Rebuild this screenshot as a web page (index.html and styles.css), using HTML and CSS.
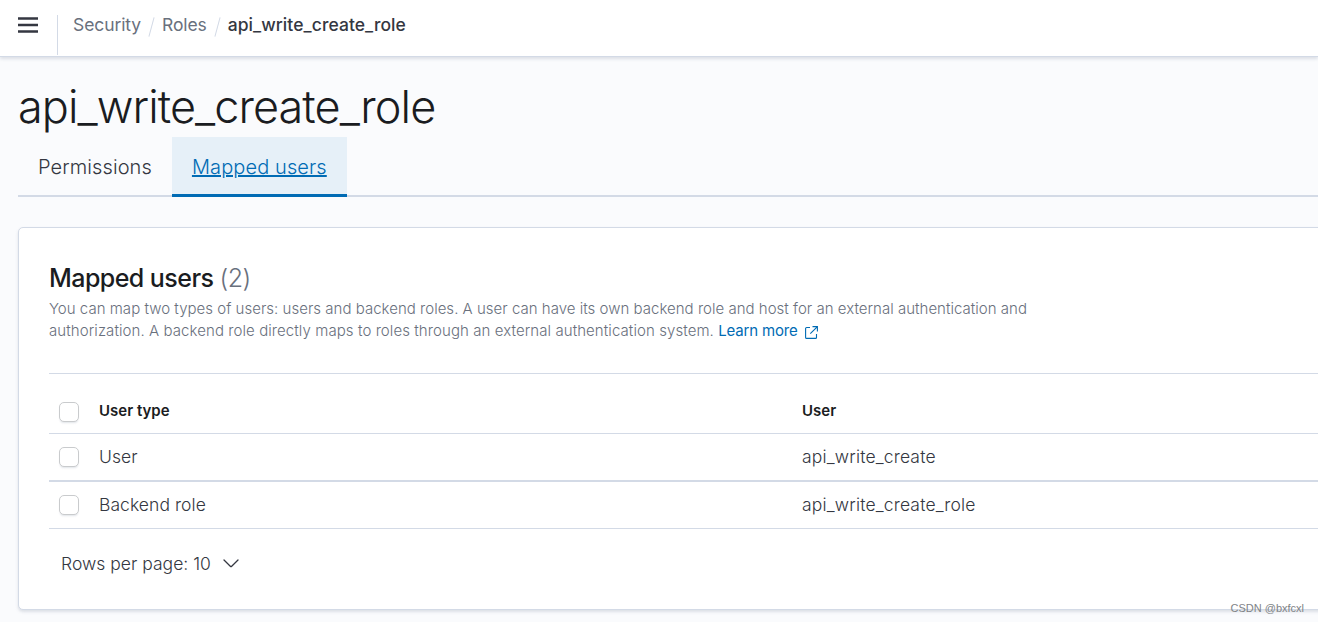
FILE: index.html
```html
<!DOCTYPE html>
<html lang="en">
<head>
  <meta charset="UTF-8">
  <meta name="viewport" content="width=device-width, initial-scale=1.0">
  <title>api_write_create_role</title>
  <link rel="stylesheet" href="styles.css">
</head>
<body>
  <header class="header">
    <button class="menu-button" type="button" aria-label="Toggle navigation">
      <svg width="20" height="16" viewBox="0 0 20 16">
        <path d="M0 1.5h20M0 8h20M0 14.5h20" stroke="#343741" stroke-width="2.5"/>
      </svg>
    </button>
    <nav class="breadcrumbs">
      <a class="crumb" href="#">Security</a>
      <span class="divider"></span>
      <a class="crumb" href="#">Roles</a>
      <span class="divider"></span>
      <span class="crumb current">api_write_create_role</span>
    </nav>
  </header>

  <main class="page">
    <h1 class="page-title">api_write_create_role</h1>
    <div class="tabs">
      <a class="tab" href="#">Permissions</a>
      <a class="tab selected" href="#">Mapped users</a>
    </div>

    <section class="panel">
      <h3 class="panel-title">Mapped users <span class="count">(2)</span></h3>
      <p class="description">
        You can map two types of users: users and backend roles. A user can have its own backend role and host for an external authentication and<br>
        <span class="second-line">authorization. A backend role directly maps to roles through an external authentication system.</span>
        <a class="link" href="#">Learn more<svg class="popout" width="13" height="13" viewBox="0 0 13 13" fill="none" stroke="#006bb4" stroke-width="1.1"><path d="M5 1.5H1.6a1 1 0 0 0-1 1v8.9a1 1 0 0 0 1 1h8.9a1 1 0 0 0 1-1V8M7.5.6h4.9v4.9M12.2.8 5.3 7.7"/></svg></a>
      </p>

      <table class="users">
        <thead>
          <tr>
            <th class="check"><input type="checkbox"></th>
            <th class="type">User type</th>
            <th>User</th>
          </tr>
        </thead>
        <tbody>
          <tr>
            <td class="check"><input type="checkbox"></td>
            <td>User</td>
            <td class="name">api_write_create</td>
          </tr>
          <tr>
            <td class="check"><input type="checkbox"></td>
            <td>Backend role</td>
            <td class="name">api_write_create_role</td>
          </tr>
        </tbody>
      </table>

      <button class="rows-button" type="button">
        Rows per page: 10
        <svg width="16" height="9" viewBox="0 0 16 9" fill="none" stroke="#343741" stroke-width="1.3" stroke-linecap="round" stroke-linejoin="round"><path d="M1 1l6.3 6.3a1 1 0 0 0 1.4 0L15 1"/></svg>
      </button>
    </section>
  </main>
  <span class="watermark">CSDN @bxfcxl</span>
</body>
</html>
```

FILE: styles.css
```css
* {
  box-sizing: border-box;
}
body {
  margin: 0;
  height: 622px;
  overflow: hidden;
  background-color: #fafbfd;
  color: #343741;
  font-family: Inter, sans-serif;
  font-size: 17.5px;
  font-weight: 300;
}
a {
  color: inherit;
  text-decoration: none;
}
button {
  display: flex;
  align-items: center;
  padding: 0;
  border: none;
  background: none;
  color: inherit;
  font: inherit;
  cursor: pointer;
}
.header {
  display: flex;
  align-items: flex-start;
  height: 57px;
  background-color: #fff;
  border-bottom: 1px solid #d3dae6;
  box-shadow: 0 2px 3px rgba(152, 162, 179, 0.3);
}
.menu-button {
  width: 58px;
  height: 40px;
  margin-top: 15px;
  padding: 2px 0 0 18px;
  align-items: flex-start;
  border-right: 1px solid #d3dae6;
}
.breadcrumbs {
  display: flex;
  align-items: center;
  height: 26px;
  margin: 11px 0 0 15px;
  font-weight: 400;
}
.crumb {
  color: #69707d;
  letter-spacing: -0.1px;
}
.crumb.current {
  color: #343741;
  font-weight: 450;
  letter-spacing: 0.07px;
}
.divider {
  width: 1px;
  height: 20px;
  margin: 6px 10px 0;
  background-color: #d3dae6;
  transform: rotate(15deg);
}
.page {
  padding: 23px 0 0 18px;
}
.page-title {
  margin: 0;
  height: 57px;
  line-height: 54px;
  font-size: 45px;
  font-weight: 300;
  letter-spacing: -0.93px;
  color: #1a1c21;
}
.tabs {
  display: flex;
  height: 60px;
  box-shadow: inset 0 -2px #d3dae6;
}
.tab {
  padding: 0 20px;
  font-size: 20px;
  line-height: 60px;
  letter-spacing: 0.1px;
}
.tab.selected {
  background-color: #e6f0f8;
  box-shadow: inset 0 -3px #006bb4;
  color: #006bb4;
  text-decoration: underline;
  letter-spacing: 0.11px;
}
.panel {
  width: 1320px;
  height: 383px;
  margin-top: 30px;
  padding: 31px 0 0 30px;
  background-color: #fff;
  border: 1px solid #d3dae6;
  border-radius: 5px;
  box-shadow: 0 2px 3px rgba(152, 162, 179, 0.3);
}
.panel-title {
  margin: 0;
  line-height: 39px;
  font-size: 25px;
  font-weight: 450;
  letter-spacing: -0.55px;
  color: #1a1c21;
}
.count {
  color: #69707d;
  font-weight: 300;
}
.description {
  margin: 0 0 31px;
  font-size: 15px;
  line-height: 22px;
  letter-spacing: 0.02px;
  color: #69707d;
  white-space: nowrap;
}
.second-line {
  letter-spacing: 0.08px;
}
.link {
  color: #006bb4;
  font-weight: 400;
  letter-spacing: -0.15px;
}
.popout {
  margin-left: 7px;
  vertical-align: -3px;
}
.users {
  width: 100%;
  table-layout: fixed;
  border-collapse: separate;
  border-spacing: 0;
  border-top: 1px solid #d3dae6;
}
.users th,
.users td {
  padding: 0;
  border-bottom: 1px solid #d3dae6;
  text-align: left;
}
.users th {
  height: 60px;
  padding-top: 14px;
  font-size: 15px;
  font-weight: 600;
  color: #1a1c21;
}
.users th.check {
  padding-top: 17px;
}
.users td {
  height: 47px;
  padding-bottom: 1px;
}
.users td.check {
  padding-bottom: 0;
}
.users tbody tr:first-child td {
  height: 48px;
  border-bottom-width: 2px;
}
.users .check {
  width: 50px;
  padding-left: 10px;
}
.users .type {
  width: 703px;
}
.users td:nth-child(2) {
  letter-spacing: 0.06px;
}
.users .name {
  letter-spacing: 0.18px;
}
.users input {
  display: block;
  width: 20px;
  height: 20px;
  margin: 0;
  appearance: none;
  background-color: #fff;
  border: 1px solid #c9cbcd;
  border-radius: 5px;
  box-shadow: 0 2px 2px -1px rgba(152, 162, 179, 0.3);
}
.rows-button {
  gap: 12px;
  height: 50px;
  margin: 9px 0 0 12px;
  letter-spacing: 0.02px;
}
.watermark {
  position: absolute;
  right: 14px;
  bottom: 7px;
  font: 11px/14px "Liberation Sans", sans-serif;
  color: #808387;
}
```
